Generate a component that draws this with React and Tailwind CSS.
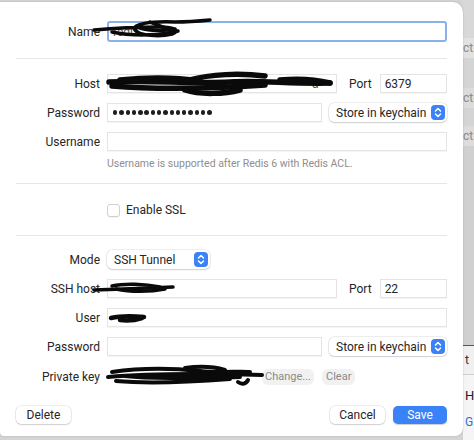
import React from 'react';

const Field = ({ className = '', children }) => (
  <div
    className={`h-[19px] flex items-center px-[4px] bg-white border border-[#e4e4e4] shadow-[0_1px_0_rgba(0,0,0,0.04)] ${className}`}
  >
    {children}
  </div>
);

const Stepper = () => (
  <div className="w-[14px] h-[15px] rounded-[4px] bg-[#3b82f6] flex items-center justify-center">
    <svg width="8" height="11" viewBox="0 0 8 11" fill="none" stroke="white" strokeWidth="1.5" strokeLinecap="round" strokeLinejoin="round">
      <path d="M1.5 4 L4 1.5 L6.5 4" />
      <path d="M1.5 7 L4 9.5 L6.5 7" />
    </svg>
  </div>
);

const Select = ({ label, className = '' }) => (
  <div
    className={`h-[19px] flex items-center justify-between pl-[7px] pr-[2px] bg-white rounded-[5px] shadow-[0_0_0_0.5px_rgba(0,0,0,0.14),0_1px_1.5px_rgba(0,0,0,0.12)] ${className}`}
  >
    <span>{label}</span>
    <Stepper />
  </div>
);

const Row = ({ label, className = '', children }) => (
  <div className={`flex items-center ${className}`}>
    <div className="w-[85px] text-right pr-[1px] shrink-0">{label}</div>
    <div className="ml-[6px] flex-1 flex items-center">{children}</div>
  </div>
);

const Button = ({ children, primary, className = '' }) => (
  <div
    className={`h-[18px] rounded-[5px] flex items-center justify-center ${
      primary
        ? 'bg-[#3a82f7] text-white shadow-[0_0.5px_1px_rgba(0,0,0,0.2)]'
        : 'bg-white shadow-[0_0_0_0.5px_rgba(0,0,0,0.14),0_1px_1.5px_rgba(0,0,0,0.12)]'
    } ${className}`}
  >
    {children}
  </div>
);

const Dots = () => (
  <div className="flex gap-[1.9px] ml-[1px]">
    {Array.from({ length: 16 }).map((_, i) => (
      <div key={i} className="w-[4.4px] h-[4.4px] rounded-full bg-[#1e1e1e]" />
    ))}
  </div>
);

const Divider = ({ className = '' }) => <div className={`h-px bg-[#e6e6e6] ${className}`} />;

export default function App() {
  return (
    <div
      className="w-[474px] h-[440px] bg-[#d4d4d4] flex overflow-hidden text-[12px] text-[#262626]"
      style={{ fontFamily: 'Roboto, "Liberation Sans", Arial, sans-serif' }}
    >
      <div className="relative w-[463px] h-[434px] mt-[2px] bg-white rounded-tr-[10px] rounded-br-[8px] rounded-bl-[4px] shadow-[0_0_2px_rgba(0,0,0,0.2)] px-[16px] pt-[19px] shrink-0 z-10">
        <Row label="Name">
          <div className="flex-1 h-[21px] rounded-[3px] border-2 border-[#8db0ec] bg-white flex items-center px-[4px] text-[#555]">
            redis
          </div>
        </Row>

        <Divider className="mt-[16px]" />

        <Row label="Host" className="mt-[15px]">
          <Field className="w-[230px] text-[#555]">
            <span className="ml-[200px]">a</span>
          </Field>
          <span className="ml-[12px]">Port</span>
          <Field className="flex-1 ml-[8px]">6379</Field>
        </Row>

        <Row label="Password" className="mt-[10px]">
          <Field className="w-[215px]">
            <Dots />
          </Field>
          <Select label="Store in keychain" className="flex-1 ml-[7px]" />
        </Row>

        <Row label="Username" className="mt-[10px]">
          <Field className="flex-1" />
        </Row>

        <div className="ml-[91px] mt-[6px] text-[10.5px] leading-[13px] text-[#8e8e8e]">
          Username is supported after Redis 6 with Redis ACL.
        </div>

        <Divider className="mt-[13px]" />

        <div className="ml-[91px] mt-[19px] flex items-center h-[14px]">
          <div className="w-[13px] h-[13px] rounded-[3px] border border-[#d0d0d0] bg-white shadow-[0_1px_0_rgba(0,0,0,0.04)]" />
          <span className="ml-[6px]">Enable SSL</span>
        </div>

        <Divider className="mt-[18px]" />

        <Row label="Mode" className="mt-[14px]">
          <Select label="SSH Tunnel" className="w-[103px]" />
        </Row>

        <Row label="SSH host" className="mt-[10px]">
          <Field className="w-[230px]" />
          <span className="ml-[12px]">Port</span>
          <Field className="flex-1 ml-[8px]">22</Field>
        </Row>

        <Row label="User" className="mt-[10px]">
          <Field className="flex-1" />
        </Row>

        <Row label="Password" className="mt-[10px]">
          <Field className="w-[215px]" />
          <Select label="Store in keychain" className="flex-1 ml-[7px]" />
        </Row>

        <Row label="Private key" className="mt-[12px]">
          <span className="w-[155px]" />
          <div className="h-[16px] px-[3px] rounded-[6px] bg-[#f1f1f1] text-[11px] text-[#8a8a8a] flex items-center">
            Change...
          </div>
          <div className="ml-[8px] h-[16px] px-[4px] rounded-[6px] bg-[#f1f1f1] text-[11px] text-[#8a8a8a] flex items-center">
            Clear
          </div>
        </Row>

        <div className="mt-[20px] flex items-center">
          <Button className="w-[55px]">Delete</Button>
          <div className="flex-1" />
          <Button className="w-[55px]">Cancel</Button>
          <Button primary className="w-[54px] ml-[8px]">Save</Button>
        </div>

        <svg className="absolute left-0 top-0 pointer-events-none" width="463" height="434" viewBox="0 2 463 434" fill="none" stroke="#0a0a0a" strokeLinecap="round" strokeLinejoin="round">
          <g strokeWidth="3.5">
            <path d="M94 30 C115 28 135 27 160 27 C175 27 180 31 172 34 C160 37 140 36 135 30 C132 24 150 21 175 22 C190 22 200 21 210 20" />
            <path d="M112 32 C130 36 160 36 178 31" />
            <path d="M150 22 C160 26 168 30 175 30" />
            <path d="M140 28 C150 31 165 31 175 29" />
          </g>
          <g strokeWidth="5.5">
            <path d="M109 82 C150 80 190 84 230 82 C260 80 290 84 330 83" />
            <path d="M112 86 C160 90 220 88 265 85" />
            <path d="M190 80 C210 74 240 73 265 76" />
            <path d="M185 90 C200 95 225 94 240 90" />
            <path d="M280 80 C300 78 318 80 330 83" />
            <path d="M120 80 C150 77 180 78 200 81" />
          </g>
          <g strokeWidth="3.5">
            <path d="M94 290 C120 289 150 288 173 287" />
            <path d="M112 286 C125 283 145 284 160 287" />
            <path d="M116 289 C130 292 150 292 165 289" />
          </g>
          <g strokeWidth="4.5">
            <path d="M111 318 C120 316 132 316 144 317" />
            <path d="M120 320 C128 321 136 320 142 318" />
          </g>
          <g strokeWidth="4">
            <path d="M108 377 C140 374 190 373 262 375" />
            <path d="M112 372 C140 368 170 368 200 371 C220 373 240 371 250 372" />
            <path d="M116 381 C150 384 190 382 230 379" />
            <path d="M185 368 C200 366 215 367 225 370" />
            <path d="M238 382 C242 385 246 384 248 380" />
            <path d="M125 376 C150 379 190 378 240 377" />
          </g>
        </svg>
      </div>

      <div className="flex-1 relative text-[12px] text-[#555]">
        <div className="h-[38px] bg-[#d8d8d8]" />
        <div className="h-[20px] bg-[#e2e2e2] flex items-center justify-end pr-[2px] text-[#888]">ct</div>
        <div className="h-[30px] bg-[#d4d4d4]" />
        <div className="h-[20px] bg-[#dcdcdc] flex items-center justify-end pr-[2px] text-[#888]">ct</div>
        <div className="h-[18px] bg-[#d4d4d4]" />
        <div className="h-[20px] bg-[#dcdcdc] flex items-center justify-end pr-[2px] text-[#888]">ct</div>
        <div className="h-[199px] bg-[#d0d0d0]" />
        <div className="h-[1px] bg-[#555]" />
        <div className="h-[28px] bg-[#f0f0f0] flex items-center pl-[2px] text-[#333]">t</div>
        <div className="h-[1px] bg-[#cfcfcf]" />
        <div className="h-[30px] bg-[#f5f5f5] flex items-end pl-[2px] text-[13px] text-[#222]">H</div>
        <div className="h-[35px] bg-[#f5f5f5] pl-[2px] pt-[8px] text-[#2f6fd6]">G</div>
      </div>
    </div>
  );
}
